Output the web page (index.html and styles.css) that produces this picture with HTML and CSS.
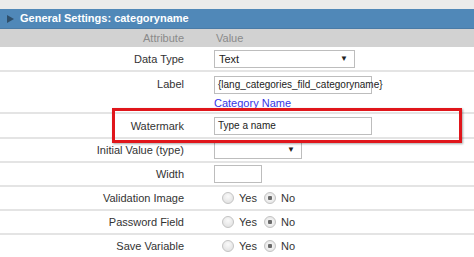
FILE: index.html
```html
<!DOCTYPE html>
<html lang="en">
<head>
    <meta charset="UTF-8">
    <title>General Settings</title>
    <link rel="stylesheet" href="styles.css">
</head>
<body>
    <div class="topstrip"></div>
    <div class="panel">
        <div class="panel-title"><span class="arrow"></span>General Settings: categoryname</div>
        <table class="settings">
            <tr class="head">
                <th class="attr">Attribute</th>
                <th class="val">Value</th>
            </tr>
            <tr class="r-type">
                <td class="attr">Data Type</td>
                <td class="val"><div class="select sel-type">Text<span class="caret">&#9660;</span></div></td>
            </tr>
            <tr class="r-label">
                <td class="attr">Label</td>
                <td class="val">
                    <div class="input in-wide">{lang_categories_fild_categoryname}</div>
                    <a class="link" href="#">Category Name</a>
                </td>
            </tr>
            <tr class="r-water">
                <td class="attr">Watermark</td>
                <td class="val"><div class="input in-wide">Type a name</div></td>
            </tr>
            <tr>
                <td class="attr">Initial Value (type)</td>
                <td class="val"><div class="select sel-init"><span class="caret">&#9660;</span></div></td>
            </tr>
            <tr>
                <td class="attr">Width</td>
                <td class="val"><div class="input in-small"></div></td>
            </tr>
            <tr>
                <td class="attr">Validation Image</td>
                <td class="val"><span class="radio"></span>Yes <span class="radio on"></span>No</td>
            </tr>
            <tr>
                <td class="attr">Password Field</td>
                <td class="val"><span class="radio"></span>Yes <span class="radio on"></span>No</td>
            </tr>
            <tr>
                <td class="attr">Save Variable</td>
                <td class="val"><span class="radio"></span>Yes <span class="radio on"></span>No</td>
            </tr>
        </table>
        <div class="highlight"></div>
    </div>
</body>
</html>
```

FILE: styles.css
```css
body { margin: 0; font-family: "Liberation Sans", Arial, sans-serif; font-size: 11px; color: #333; background: #fff; }
.topstrip { height: 9px; background: #ebebeb; }
.panel { position: relative; }
.panel-title { height: 19px; line-height: 19px; background: #5088b8; border-bottom: 1px solid #4a7ba6; color: #fff; font-weight: bold; font-size: 11px; padding-left: 7px; display: flex; align-items: center; }
.arrow { width: 0; height: 0; border-left: 7px solid #2f4f6a; border-top: 4px solid transparent; border-bottom: 4px solid transparent; margin-right: 6px; }
.settings { width: 100%; border-collapse: collapse; }
.settings td, .settings th { padding: 0; border-bottom: 2px solid #e4e4e4; height: 22px; vertical-align: middle; }
.settings .attr { width: 184px; text-align: right; padding-right: 0; }
.settings .val { text-align: left; padding-left: 30px; }
.head th { background: #d2d2d2; color: #8a8a8a; font-weight: normal; height: 18px; border-bottom: 0; font-size: 11px; }
.head .val { padding-left: 32px; }
.r-type td { height: 23px; }
.r-label td { height: 34px; }
.r-label .attr { vertical-align: top; padding-top: 6px; }
.r-label .val { vertical-align: top; padding-top: 4px; }
.r-water td { height: 23px; }
.input, .select { box-sizing: border-box; height: 18px; border: 1px solid #bdbdbd; background: #fff; line-height: 16px; padding-left: 3px; font-size: 10px; color: #222; }
.in-wide { width: 158px; }
.in-small { width: 48px; }
.select { position: relative; display: flex; justify-content: space-between; align-items: center; padding: 0 6px 0 4px; font-size: 11px; }
.sel-type { width: 141px; }
.sel-init { width: 88px; justify-content: flex-end; }
.caret { font-size: 8px; color: #222; }
.link { display: block; color: #3434e6; margin-top: 3px; font-size: 11px; }
.radio { display: inline-block; box-sizing: border-box; width: 12px; height: 12px; border-radius: 50%; border: 1px solid #c4c4c4; background: radial-gradient(circle at 50% 35%, #fafafa, #dcdcdc); vertical-align: -2px; margin: 0 5px 0 8px; }
.radio.on { background: radial-gradient(circle, #6a6a6a 0 2px, #f2f2f2 2.5px, #dcdcdc); margin-left: 4px; }
.highlight { position: absolute; left: 112px; top: 99px; width: 344px; height: 29px; border: 3px solid #e0161b; box-shadow: 1px 1px 2px rgba(0,0,0,0.35); }
```
